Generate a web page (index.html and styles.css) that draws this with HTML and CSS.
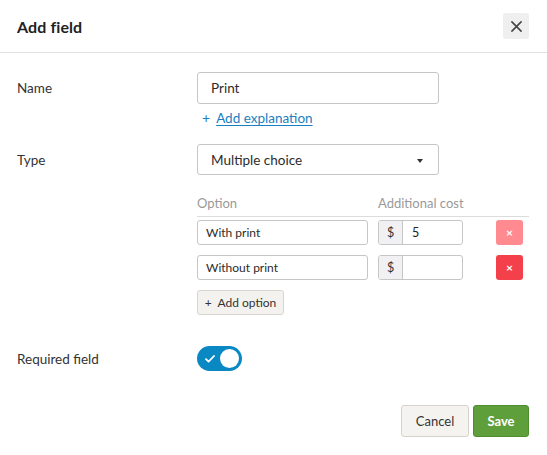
FILE: index.html
```html
<!DOCTYPE html>
<html>
<head>
<meta charset="utf-8">
<link rel="stylesheet" href="styles.css">
</head>
<body>
<div class="modal">
  <div class="header">
    <div class="title">Add field</div>
    <button class="close" aria-label="Close">
      <svg width="11" height="11" viewBox="0 0 12 12"><path d="M1 1L11 11M11 1L1 11" stroke="#444" stroke-width="1.7" stroke-linecap="round"/></svg>
    </button>
  </div>
  <div class="content">
    <div class="row row-name">
      <div class="label">Name</div>
      <div class="control">
        <div class="input big">Print</div>
      </div>
    </div>
    <div class="row row-link">
      <div></div>
      <div class="control link"><span class="plus">+</span><a href="#">Add explanation</a></div>
    </div>
    <div class="row row-type">
      <div class="label">Type</div>
      <div class="control">
        <div class="input big select">Multiple choice<span class="caret"></span></div>
      </div>
    </div>
    <div class="row row-options">
      <div></div>
      <div class="options">
        <div class="opt-head">
          <div class="col-opt">Option</div>
          <div class="col-cost">Additional cost</div>
        </div>
        <div class="opt-row">
          <div class="input small col-opt">With print</div>
          <div class="cost col-cost"><span class="addon">$</span><span class="num">5</span></div>
          <button class="del faded">×</button>
        </div>
        <div class="opt-row">
          <div class="input small col-opt">Without print</div>
          <div class="cost col-cost"><span class="addon">$</span><span class="num"></span></div>
          <button class="del">×</button>
        </div>
        <button class="add-opt">+&nbsp; Add option</button>
      </div>
    </div>
    <div class="row row-req">
      <div class="label">Required field</div>
      <div class="control">
        <div class="toggle">
          <svg class="check" width="10" height="8" viewBox="0 0 10 8"><path d="M1 4.2L3.6 6.6L9 1" fill="none" stroke="#fff" stroke-width="1.8" stroke-linecap="round" stroke-linejoin="round"/></svg>
          <span class="knob"></span>
        </div>
      </div>
    </div>
    <div class="footer">
      <button class="btn cancel">Cancel</button>
      <button class="btn save">Save</button>
    </div>
  </div>
</div>
</body>
</html>
```
FILE: styles.css
```css
html, body {
  margin: 0;
  padding: 0;
  background: #fff;
}
body {
  font-family: Lato, "Open Sans", sans-serif;
  color: #333;
  width: 547px;
}
button {
  font-family: inherit;
  cursor: pointer;
}
.header {
  height: 52px;
  border-bottom: 1px solid #e2e2e2;
  display: flex;
  align-items: center;
  justify-content: space-between;
  padding: 0 18px 0 17px;
}
.title {
  font-size: 16px;
  font-weight: 700;
  color: #222;
  letter-spacing: 0.1px;
}
.close {
  width: 26px;
  height: 26px;
  border: none;
  border-radius: 3px;
  background: #efefef;
  padding: 0;
  display: flex;
  align-items: center;
  justify-content: center;
}
.content {
  padding: 19px 18px 0 17px;
}
.row {
  display: grid;
  grid-template-columns: 180px 1fr;
  align-items: center;
}
.label {
  font-size: 13.5px;
  line-height: 16px;
  color: #333;
}
.input {
  box-sizing: border-box;
  border: 1px solid #c6c6c6;
  border-radius: 3px;
  background: #fff;
  display: flex;
  align-items: center;
  color: #2b2b2b;
}
.big {
  width: 242px;
  height: 32px;
  padding: 0 13px;
  font-size: 13.5px;
}
.row-link {
  margin-top: 7px;
}
.link {
  font-size: 13.5px;
  line-height: 14px;
  padding-left: 5px;
  color: #1a7fc0;
  display: flex;
  align-items: center;
}
.link a {
  color: #1a7fc0;
  text-decoration: underline;
  text-underline-offset: 2px;
}
.plus {
  font-size: 14px;
  margin-right: 6px;
}
.row-type {
  margin-top: 19px;
}
.select {
  height: 31px;
  position: relative;
}
.caret {
  position: absolute;
  right: 15px;
  top: 14px;
  width: 0;
  height: 0;
  border-left: 3.5px solid transparent;
  border-right: 3.5px solid transparent;
  border-top: 4px solid #333;
}
.options {
  display: flex;
  flex-direction: column;
  align-items: flex-start;
  margin-top: 20px;
}
.opt-head {
  display: flex;
  width: 332px;
  font-size: 13px;
  line-height: 16px;
  color: #9a9a9a;
  padding-bottom: 5px;
  border-bottom: 1px solid #dcdcdc;
  margin-bottom: 3px;
  white-space: nowrap;
}
.col-opt {
  width: 171px;
  margin-right: 10px;
  flex: none;
}
.col-cost {
  width: 85px;
  flex: none;
}
.opt-row {
  display: flex;
  align-items: center;
  width: 332px;
  height: 25px;
  margin-bottom: 10px;
}
.small {
  height: 25px;
  padding: 0 8px;
  font-size: 12px;
}
.cost {
  box-sizing: border-box;
  height: 25px;
  display: flex;
  border: 1px solid #c6c6c6;
  border-radius: 3px;
  overflow: hidden;
  font-size: 12.5px;
}
.addon {
  width: 23px;
  background: #f1f1f3;
  border-right: 1px solid #c6c6c6;
  display: flex;
  align-items: center;
  justify-content: center;
  color: #333;
}
.num {
  flex: 1;
  display: flex;
  align-items: center;
  padding-left: 9px;
  color: #222;
}
.del {
  margin-left: 33px;
  width: 27px;
  height: 25px;
  border: none;
  border-radius: 3px;
  background: #f3404a;
  color: #fff;
  font-size: 12px;
  font-weight: 700;
  padding: 0;
  line-height: 1;
}
.del.faded {
  background: #ff8a90;
}
.add-opt {
  height: 25px;
  width: 87px;
  border: 1px solid #d8d5cf;
  border-radius: 3px;
  background: #f4f2ee;
  color: #333;
  font-size: 12px;
  padding: 0;
}
.row-req {
  margin-top: 31px;
}
.toggle {
  width: 45px;
  height: 25px;
  border-radius: 13px;
  background: #0a88c3;
  position: relative;
  display: flex;
  align-items: center;
}
.check {
  margin-left: 8px;
}
.knob {
  position: absolute;
  right: 3px;
  top: 3px;
  width: 19px;
  height: 19px;
  border-radius: 50%;
  background: #fff;
}
.footer {
  display: flex;
  justify-content: flex-end;
  gap: 4px;
  margin-top: 34px;
}
.btn {
  height: 32px;
  border-radius: 3px;
  font-size: 13px;
  padding: 0;
}
.cancel {
  width: 68px;
  background: #f5f3ef;
  border: 1px solid #d6d3cd;
  color: #333;
}
.save {
  width: 56px;
  background: #5f9f3b;
  border: 1px solid #4f8d2f;
  color: #fff;
  font-weight: 700;
}
```
